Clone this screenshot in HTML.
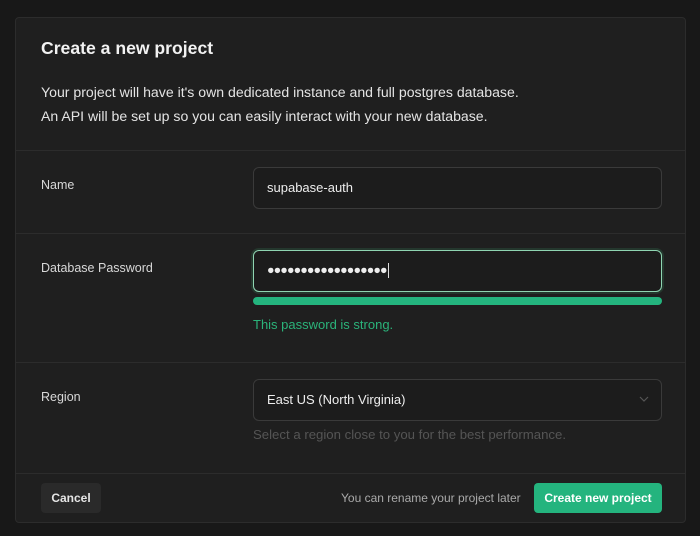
<!DOCTYPE html>
<html><head><meta charset="utf-8"><style>
*{box-sizing:border-box;margin:0;padding:0}
body{width:700px;height:536px;background:#181818;font-family:"Liberation Sans",sans-serif;color:#ededed;position:relative;overflow:hidden}
.card{position:absolute;left:15px;top:17px;width:671px;height:506px;background:#1f1f1f;border:1px solid #2c2c2c;border-radius:4px}
.sec{position:absolute;left:0;right:0;border-top:1px solid #2c2c2c}
h1{position:absolute;left:25px;top:20px;font-size:17.6px;font-weight:bold;color:#f2f2f2}
.desc{position:absolute;left:25px;top:62px;font-size:14.1px;line-height:24px;color:#e4e4e4}
.lbl{position:absolute;left:25px;font-size:12.5px;color:#d8d8d8}
.inp{position:absolute;left:237px;width:409px;height:42px;border:1px solid #3a3a3a;border-radius:6px;background:#1c1c1c;font-size:13px;padding:12px 13px;color:#ededed}
.small{position:absolute;left:237px;font-size:13px}
.btn{position:absolute;top:465px;height:30px;border-radius:4px;font-size:12px;font-weight:bold;line-height:30px;text-align:center}
</style></head><body>
<div class="card">
<h1>Create a new project</h1>
<div class="desc">Your project will have it's own dedicated instance and full postgres database.<br>An API will be set up so you can easily interact with your new database.</div>
<div class="sec" style="top:132px"></div>
<div class="lbl" style="top:160px">Name</div>
<div class="inp" style="top:149px">supabase-auth</div>
<div class="sec" style="top:215px"></div>
<div class="lbl" style="top:243px">Database Password</div>
<div class="inp" style="top:232px;border-color:#8fd5b2;box-shadow:0 0 0 2px #24372d;font-size:12.5px;letter-spacing:-0.9px;padding-top:12px">●●●●●●●●●●●●●●●●●●<span style="display:inline-block;width:1px;height:15px;background:#ddd;vertical-align:middle;margin-left:1px"></span></div>
<div style="position:absolute;left:237px;top:279px;width:409px;height:8px;border-radius:4px;background:#24b47e"></div>
<div class="small" style="top:299px;color:#2bb37a">This password is strong.</div>
<div class="sec" style="top:344px"></div>
<div class="lbl" style="top:372px">Region</div>
<div class="inp" style="top:361px">East US (North Virginia)<svg style="position:absolute;right:12px;top:16px" width="10" height="6" viewBox="0 0 10 6"><path d="M1 1l4 4 4-4" stroke="#555" stroke-width="1.2" fill="none"/></svg></div>
<div class="small" style="top:409px;color:#555;font-size:13.2px">Select a region close to you for the best performance.</div>
<div class="sec" style="top:455px"></div>
<div class="btn" style="left:25px;width:60px;background:#2a2a2a;color:#e6e6e6">Cancel</div>
<div style="position:absolute;left:325px;top:473px;font-size:12px;color:#aaa">You can rename your project later</div>
<div class="btn" style="left:518px;width:128px;background:#24b47e;color:#fff">Create new project</div>
</div>
</body></html>
